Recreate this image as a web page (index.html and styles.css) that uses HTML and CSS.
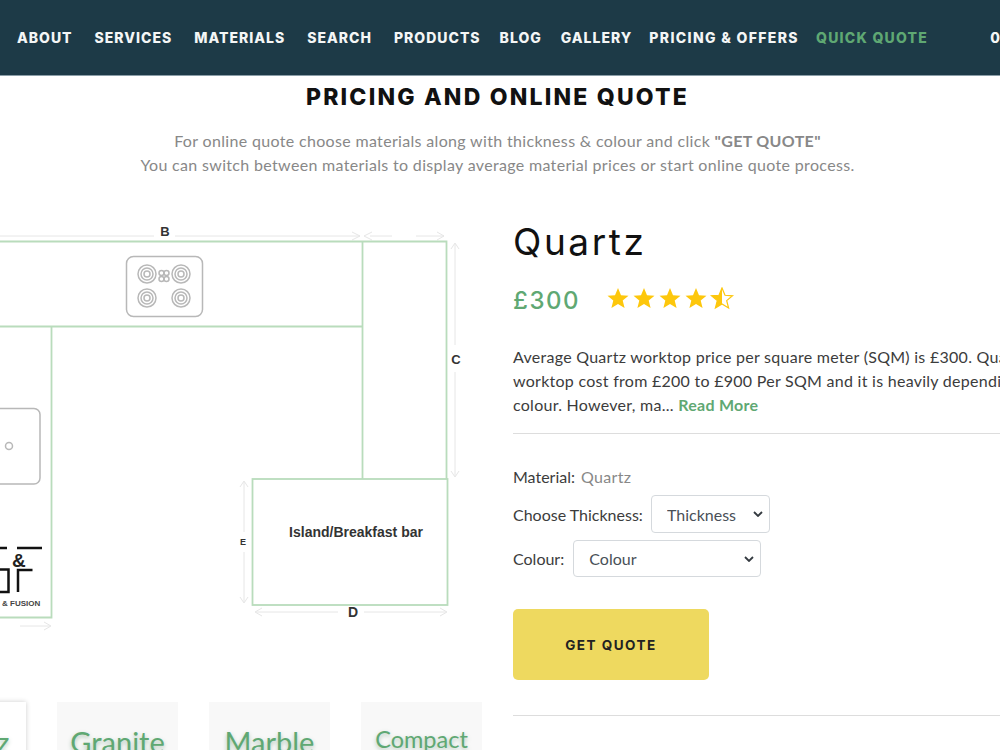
FILE: index.html
```html
<!DOCTYPE html>
<html>

<head>
    <title>Pricing and Online Quote</title>
    <link rel="stylesheet" href="styles.css">
</head>

<body>
    <nav class="topnav">
        <a href="#">ABOUT</a>
        <a href="#">SERVICES</a>
        <a href="#">MATERIALS</a>
        <a href="#">SEARCH</a>
        <a href="#" class="tight">PRODUCTS</a>
        <a href="#" class="tight">BLOG</a>
        <a href="#" class="tight">GALLERY</a>
        <a href="#" class="tight wide">PRICING &amp; OFFERS</a>
        <a href="#" class="tight active">QUICK QUOTE</a>
        <span class="phone">0</span>
    </nav>

    <section class="intro">
        <h1>PRICING AND ONLINE QUOTE</h1>
        <p>For online quote choose materials along with thickness &amp; colour and click <strong>"GET QUOTE"</strong><br>
            You can switch between materials to display average material prices or start online quote process.</p>
    </section>

    <div class="quote-row">
        <div class="left-col">
            <svg class="plan" width="482" height="440" viewBox="0 205 482 440">
                <!-- dimension lines -->
                <g class="dim">
                    <path d="M0 236H154M175 236H360M352 232l8 4-8 4M372 232l-8 4 8 4M370 236H392M416 236H444M437 232l7 4-7 4" />
                    <path d="M455 244V345M455 372V476M451 249l4-6 4 6M451 471l4 6 4-6" />
                    <path d="M244 482V532M244 552V602M240 487l4-6 4 6M240 597l4 6 4-6" />
                    <path d="M256 612H338M364 612H446M262 608l-7 4 7 4M440 608l7 4-7 4" />
                    <path d="M20 626H50M44 622l7 4-7 4" />
                </g>
                <!-- worktop outline -->
                <g class="top">
                    <path d="M0 241.500H446.500V479M362.500 241.500V479M0 326.500H362.500M51.500 326.500V617.500H0" />
                    <rect x="252.500" y="479" width="195" height="126" />
                </g>
                <!-- hob -->
                <g class="appliance">
                    <rect x="126.500" y="256.500" width="76" height="60" rx="7" />
                    <circle cx="147" cy="274" r="9" />
                    <circle cx="147" cy="274" r="6" />
                    <circle cx="147" cy="274" r="3" />
                    <circle cx="181" cy="274" r="9" />
                    <circle cx="181" cy="274" r="6" />
                    <circle cx="181" cy="274" r="3" />
                    <circle cx="147" cy="298" r="9" />
                    <circle cx="147" cy="298" r="6" />
                    <circle cx="147" cy="298" r="3" />
                    <circle cx="181" cy="298" r="9" />
                    <circle cx="181" cy="298" r="6" />
                    <circle cx="181" cy="298" r="3" />
                    <circle cx="161.500" cy="273" r="2.500" />
                    <circle cx="166.500" cy="273" r="2.500" />
                    <circle cx="161.500" cy="279" r="2.500" />
                    <circle cx="166.500" cy="279" r="2.500" />
                    <!-- sink -->
                    <path d="M0 408.500H34a6 6 0 0 1 6 6V478a6 6 0 0 1-6 6H0" />
                    <circle cx="9" cy="446" r="3.500" />
                </g>
                <!-- logo -->
                <g class="logo">
                    <path d="M0 548H7M17 548H42M0 569.500H8.500V592H0M18 592V570H32.500" />
                </g>
                <text class="logo-amp" x="12" y="567">&amp;</text>
                <text class="logo-name" x="2" y="606">&amp; FUSION</text>
                <text class="letter" x="165" y="236">B</text>
                <text class="letter" x="456" y="364">C</text>
                <text class="letter big" x="353" y="617">D</text>
                <text class="letter small" x="243" y="545">E</text>
                <text class="island" x="356" y="537">Island/Breakfast bar</text>
            </svg>

            <div class="thumbs">
                <div class="thumb selected">Quartz</div>
                <div class="thumb">Granite</div>
                <div class="thumb">Marble</div>
                <div class="thumb narrow">Compact</div>
            </div>
        </div>

        <div class="right-col">
            <h2>Quartz</h2>
            <div class="price-line">
                <span class="price">£300</span>
                <svg class="stars" width="128" height="24" viewBox="0 0 128 24">
                    <defs>
                        <polygon id="star" points="11,1 14,8.300 21.500,8.800 15.700,13.600 17.600,21 11,17 4.400,21 6.300,13.600 0.500,8.800 8,8.300" />
                    </defs>
                    <use href="#star" x="0" />
                    <use href="#star" x="26" />
                    <use href="#star" x="52" />
                    <use href="#star" x="78" />
                    <use href="#star" x="104" class="half-outline" />
                    <path d="M115 1 L112 8.300 L104.500 8.800 L110.300 13.600 L108.400 21 L115 17Z" />
                </svg>
            </div>
            <p class="desc">Average Quartz worktop price per square meter (SQM) is £300. Quartz<br>
                worktop cost from £200 to £900 Per SQM and it is heavily depending<br>
                colour. However, ma... <a href="#">Read More</a></p>
            <hr>
            <div class="field"><span>Material:</span> <span class="muted">Quartz</span></div>
            <div class="field">
                <label for="thickness">Choose Thickness:</label>
                <select id="thickness" class="thickness">
                    <option>Thickness</option>
                </select>
            </div>
            <div class="field">
                <label for="colour">Colour:</label>
                <select id="colour" class="colour">
                    <option>Colour</option>
                </select>
            </div>
            <button type="button" class="quote-btn">GET QUOTE</button>
            <hr>
        </div>
    </div>
</body>

</html>
```

FILE: styles.css
```css
html,
body {
    width: 1000px;
    height: 750px;
    overflow: hidden;
}

body {
    margin: 0;
    font-family: "Lato", sans-serif;
    color: #333;
    background: #fff;
}

.topnav {
    display: flex;
    align-items: center;
    height: 75px;
    padding-left: 17px;
    background-color: #1d3a47;
    border-bottom: 1px solid #8b9ea8;
    font-family: "Inter", sans-serif;
    font-weight: 800;
    font-size: 14px;
    letter-spacing: 1px;
    white-space: nowrap;
}

.topnav a {
    color: #f4f6f6;
    text-decoration: none;
    margin-right: 22px;
}

.topnav a.tight {
    margin-right: 19px;
}

.topnav a.wide {
    letter-spacing: 1.350px;
    margin-left: -2px;
    margin-right: 17px;
}

.topnav a.active {
    color: #5fa873;
    letter-spacing: 1.250px;
}

.topnav .phone {
    color: #f4f6f6;
    margin-left: 43px;
}

.intro {
    width: 995px;
    text-align: center;
}

.intro h1 {
    margin: 6px 0 0;
    font-family: "Inter", sans-serif;
    font-weight: 800;
    font-size: 23px;
    line-height: 30px;
    letter-spacing: 2.200px;
    color: #111;
}

.intro p {
    margin: 17px 0 0;
    font-size: 16px;
    line-height: 24px;
    letter-spacing: 0.33px;
    color: #888;
}

.quote-row {
    display: flex;
    width: 1120px;
    margin-top: 28px;
}

.left-col {
    width: 482px;
    flex-shrink: 0;
}

.plan {
    display: block;
}

.dim path {
    fill: none;
    stroke: #e6e6e6;
    stroke-width: 1;
}

.top path,
.top rect {
    fill: none;
    stroke: #b9dcbc;
    stroke-width: 1.800;
}

.appliance rect,
.appliance path,
.appliance circle {
    fill: none;
    stroke: #b8b8b8;
    stroke-width: 1.500;
}

.logo path {
    fill: none;
    stroke: #111;
    stroke-width: 2.500;
}

.logo-amp {
    font-family: "Liberation Sans", sans-serif;
    font-weight: 700;
    font-size: 19px;
    fill: #222;
}

.logo-name {
    font-family: "Liberation Sans", sans-serif;
    font-weight: 700;
    font-size: 8px;
    fill: #444;
}

.letter {
    font-family: "Liberation Sans", sans-serif;
    font-weight: 700;
    font-size: 13px;
    fill: #333;
    text-anchor: middle;
}

.letter.big {
    font-size: 14px;
}

.letter.small {
    font-size: 9px;
}

.island {
    font-family: "Liberation Sans", sans-serif;
    font-weight: 700;
    font-size: 14px;
    fill: #333;
    text-anchor: middle;
}

.thumbs {
    display: flex;
    justify-content: flex-end;
    gap: 31px;
    margin-top: 57px;
}

.thumb {
    flex: 0 0 121px;
    height: 90px;
    padding-top: 22px;
    box-sizing: border-box;
    background-color: #f8f8f8;
    text-align: center;
    font-size: 29px;
    color: #5fa873;
    text-shadow: 0 2px 4px rgba(60, 120, 80, 0.4);
}

.thumb.narrow {
    padding-top: 23px;
    font-size: 23.500px;
}

.thumb.selected {
    background-color: #fff;
    box-shadow: 0 0 5px rgba(0, 0, 0, 0.2);
}

.right-col {
    width: 600px;
    margin-left: 31px;
    flex-shrink: 0;
}

.right-col h2 {
    margin: 15px 0 0;
    font-family: "Inter", sans-serif;
    font-weight: 400;
    font-size: 37px;
    line-height: 44px;
    letter-spacing: 2.600px;
    color: #111;
}

.price-line {
    display: flex;
    align-items: center;
    margin-top: 22px;
}

.price {
    width: 94px;
    font-family: "Inter", sans-serif;
    font-size: 24px;
    font-weight: 500;
    letter-spacing: 1.500px;
    color: #5fa873;
}

.stars {
    margin-top: -4px;
    fill: #fdc70c;
}

.half-outline {
    fill: none;
    stroke: #fdc70c;
    stroke-width: 1.200;
}

.desc {
    margin: 30px 0 0;
    font-size: 16px;
    line-height: 24px;
    letter-spacing: 0.27px;
    white-space: nowrap;
    color: #3c3c3c;
}

.desc a {
    color: #5fa873;
    font-weight: 700;
    text-decoration: none;
}

hr {
    margin: 16px 0 0;
    border: 0;
    border-top: 1px solid #ddd;
}

.field {
    font-size: 16px;
    color: #3c3c3c;
    margin-top: 8px;
}

hr+.field {
    margin-top: 33px;
    margin-bottom: 9px;
}

.muted {
    margin-left: 2px;
    letter-spacing: 0.3px;
    color: #888;
}

select {
    height: 38px;
    margin-left: 4px;
    padding: 0 24px 0 15px;
    appearance: none;
    font-family: "Lato", sans-serif;
    font-size: 16px;
    color: #495057;
    background: #fff url("data:image/svg+xml,%3Csvg xmlns='http://www.w3.org/2000/svg' width='10' height='6'%3E%3Cpath d='M1 1l4 4 4-4' fill='none' stroke='%23343a40' stroke-width='1.800'/%3E%3C/svg%3E") no-repeat right 6px center;
    border: 1px solid #d5d9dd;
    border-radius: 4px;
}

.thickness {
    width: 119px;
}

.colour {
    width: 188px;
    height: 37px;
    margin-left: 5px;
}

.field:has(.colour) {
    margin-top: 7px;
}

.quote-btn {
    display: block;
    width: 196px;
    height: 71px;
    margin-top: 32px;
    border: 0;
    border-radius: 5px;
    background-color: #eed95f;
    font-family: "Inter", sans-serif;
    font-weight: 700;
    font-size: 13.500px;
    letter-spacing: 1.500px;
    color: #222;
}

.quote-btn+hr {
    margin-top: 35px;
}
```
